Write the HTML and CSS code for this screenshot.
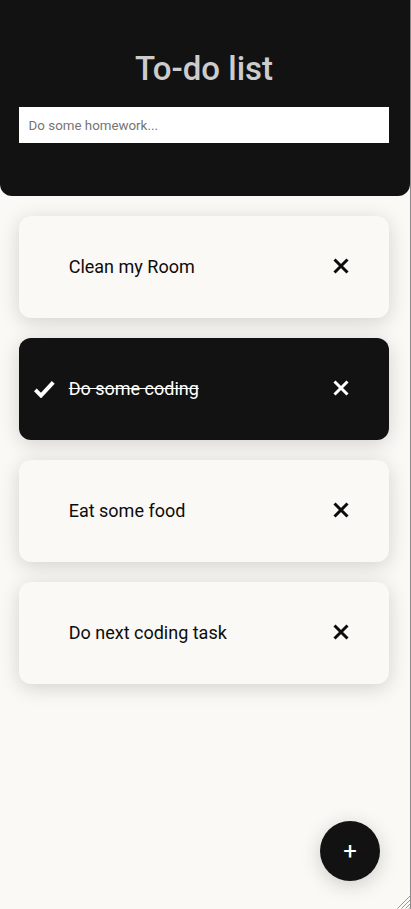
FILE: index.html
```html
<!DOCTYPE html>
<html lang="en">
<head>
<meta charset="utf-8">
<title>To-do list</title>
<link rel="stylesheet" href="styles.css">
</head>
<body>
<div class="app">
  <header class="header">
    <h1 class="title">To-do list</h1>
    <input class="new-task" type="text" placeholder="Do some homework...">
  </header>
  <main class="list">
    <div class="card">
      <span class="check"></span>
      <span class="label">Clean my Room</span>
      <button class="remove" aria-label="Remove"><svg viewBox="0 0 16 16" class="x"><path d="M1.5 1.5 14.5 14.5M14.5 1.5 1.5 14.5"/></svg></button>
    </div>
    <div class="card done">
      <span class="check"><svg viewBox="0 0 24 20" class="tick"><path d="M1.5 11 8 17.5 22 2.5"/></svg></span>
      <span class="label">Do some coding</span>
      <button class="remove" aria-label="Remove"><svg viewBox="0 0 16 16" class="x"><path d="M1.5 1.5 14.5 14.5M14.5 1.5 1.5 14.5"/></svg></button>
    </div>
    <div class="card">
      <span class="check"></span>
      <span class="label">Eat some food</span>
      <button class="remove" aria-label="Remove"><svg viewBox="0 0 16 16" class="x"><path d="M1.5 1.5 14.5 14.5M14.5 1.5 1.5 14.5"/></svg></button>
    </div>
    <div class="card">
      <span class="check"></span>
      <span class="label">Do next coding task</span>
      <button class="remove" aria-label="Remove"><svg viewBox="0 0 16 16" class="x"><path d="M1.5 1.5 14.5 14.5M14.5 1.5 1.5 14.5"/></svg></button>
    </div>
  </main>
  <button class="fab" aria-label="Add">+</button>
  <svg class="grip" viewBox="0 0 16 16"><path d="M15.5 2.5 2.5 15.5M15.5 6.5 6.5 15.5M15.5 10.5 10.5 15.5M15.5 14 14 15.5"/></svg>
</div>
</body>
</html>
```
FILE: styles.css
```css
* { box-sizing: border-box; }
html, body { margin: 0; height: 100%; }
body { background: #faf9f5; font-family: Roboto, sans-serif; overflow: hidden; }
.app { position: relative; height: 909px; width: 411px; border-right: 1px solid #8a8a8a; }
.header {
  height: 196px;
  background: #121212;
  border-radius: 0 0 12px 12px;
  padding: 49px 21px 0 19px;
  display: flex;
  flex-direction: column;
  gap: 19px;
}
.title { margin: 0; height: 39px; line-height: 39px; font-size: 33px; font-weight: 500; color: #ccc; text-align: center; }
.new-task {
  display: block; width: 100%; height: 36px; border: 0; border-radius: 0;
  padding: 0 10px 0 9.6px; background: #fff; font: 400 13.333px Roboto, sans-serif; outline: none;
}
.new-task::placeholder { color: #757575; opacity: 1; }
.list { padding: 20px 21px 0 19px; display: flex; flex-direction: column; gap: 20px; }
.card {
  height: 102px; border-radius: 12px; background: #faf9f5;
  box-shadow: 0 4px 20px rgba(0,0,0,0.16);
  display: flex; align-items: center; color: #0c0c0c;
}
.check { width: 49.7px; flex: none; display: flex; justify-content: flex-end; padding-right: 14.2px; }
.label { flex: 1; font-size: 18px; line-height: 22px; }
.remove { width: 16px; height: 16px; margin: 0 40px 3px 0; padding: 0; border: 0; background: none; display: block; color: inherit; }
.x { display: block; width: 16px; height: 16px; fill: none; stroke: currentColor; stroke-width: 3; }
.tick { display: block; width: 21px; height: 18px; fill: none; stroke: #fff; stroke-width: 4.5; }
.done { background: #121212; color: #fff; }
.done .label { text-decoration: line-through; }
.fab {
  position: absolute; left: 320px; top: 821px; width: 60px; height: 60px; border: 0; padding: 0;
  border-radius: 50%; background: #121212; color: #fff; font: 400 24px Roboto, sans-serif;
  box-shadow: 0 4px 20px rgba(0,0,0,0.18);
}
.grip { position: absolute; right: -1px; bottom: 0; width: 16px; height: 16px; fill: none; stroke: #9a9a9a; stroke-width: 1; }
```
